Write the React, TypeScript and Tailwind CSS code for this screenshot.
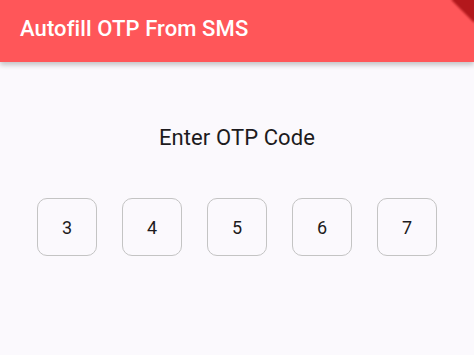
import React from "react";

export default function App() {
  const digits = ["3", "4", "5", "6", "7"];
  return (
    <div
      className="relative w-[474px] h-[355px] overflow-hidden bg-[#fbf9fd]"
      style={{ fontFamily: "Roboto, 'Noto Sans', sans-serif" }}
    >
      <header className="relative z-10 h-[62px] bg-[#ff5659] shadow-[0_3px_5px_rgba(0,0,0,0.22)] flex items-center pl-[20px]">
        <h1 className="text-white text-[22px] font-medium tracking-[0.1px] mt-[-5px]">
          Autofill OTP From SMS
        </h1>
      </header>
      <div className="absolute right-[-16px] top-[-16px] w-[32px] h-[32px] rotate-45 bg-[#b3181c] blur-[1px] z-20" />
      <main className="flex flex-col items-center">
        <p className="mt-[59px] text-[22px] text-[#1d1b20] tracking-[0.1px]">Enter OTP Code</p>
        <div className="mt-[44px] flex gap-[25px]">
          {digits.map((d) => (
            <div
              key={d}
              className="w-[60px] h-[58px] rounded-[10px] border border-[#c4c4c4] flex items-center justify-center text-[18px] text-[#1d1b20]"
            >
              {d}
            </div>
          ))}
        </div>
      </main>
    </div>
  );
}
